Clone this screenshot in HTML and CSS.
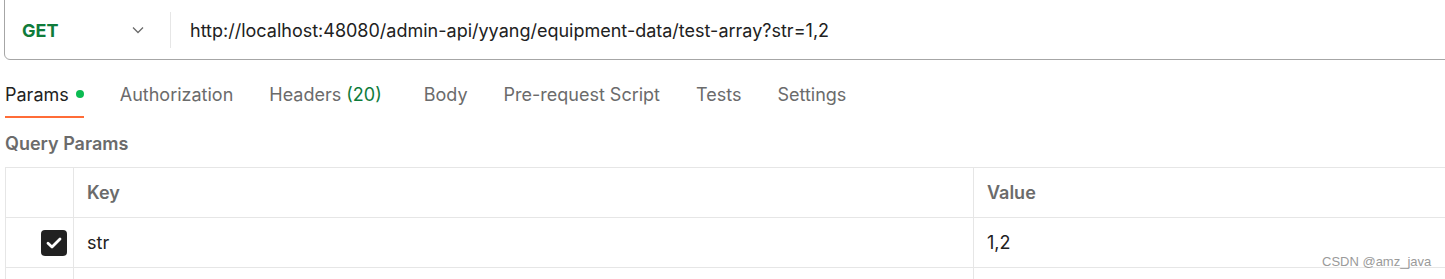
FILE: index.html
```html
<!DOCTYPE html>
<html lang="en">

<head>
  <meta charset="UTF-8" />
  <title>Request - test-array</title>
  <link rel="stylesheet" href="styles.css">
</head>

<body>
  <!-- Request URL bar -->
  <div class="url-bar">
    <div class="method">
      <span class="method-name">GET</span>
      <svg class="chevron" width="12" height="8" viewBox="0 0 12 8">
        <path d="M1 1.5 L6 6.5 L11 1.5" fill="none" stroke="#6b6b6b" stroke-width="1.3" />
      </svg>
    </div>
    <div class="url-input">http://localhost:48080/admin-api/yyang/equipment-data/test-array?str=1,2</div>
  </div>

  <nav class="tabs">
    <a class="tab active">Params <span class="dot"></span></a>
    <a class="tab">Authorization</a>
    <a class="tab headers">Headers <span class="count">(20)</span></a>
    <a class="tab">Body</a>
    <a class="tab">Pre-request Script</a>
    <a class="tab">Tests</a>
    <a class="tab">Settings</a>
  </nav>

  <h3 class="section-title">Query Params</h3>

  <div class="params-table">
    <div class="row head">
      <div class="cell check"></div>
      <div class="cell key">Key</div>
      <div class="cell value">Value</div>
    </div>
    <div class="row">
      <div class="cell check">
        <span class="checkbox">
          <svg width="16" height="12" viewBox="0 0 16 12">
            <path d="M2 6.2 L6 10 L14 2" fill="none" stroke="#fff" stroke-width="2.8" stroke-linecap="round" stroke-linejoin="round" />
          </svg>
        </span>
      </div>
      <div class="cell key">str</div>
      <div class="cell value">1,2</div>
    </div>
    <div class="row empty">
      <div class="cell check"></div>
      <div class="cell key"></div>
      <div class="cell value"></div>
    </div>
  </div>

  <div class="watermark">CSDN @amz_java</div>
</body>

</html>
```

FILE: styles.css
```css
* {
  box-sizing: border-box;
  margin: 0;
  padding: 0;
}

body {
  font-family: 'Inter', 'Noto Sans', sans-serif;
  background: #fff;
  color: #212121;
  width: 1445px;
  height: 279px;
  overflow: hidden;
  position: relative;
}

.url-bar {
  display: flex;
  align-items: center;
  margin: -8px 0 0 4px;
  width: 1460px;
  height: 68px;
  padding-top: 8px;
  border: 1px solid #a6a6a6;
  border-radius: 6px;
}

.method {
  display: flex;
  align-items: center;
  justify-content: space-between;
  width: 166px;
  height: 36px;
  padding: 0 26px 0 17px;
  border-right: 1px solid #e6e6e6;
}

.method-name {
  color: #0f7b3b;
  font-weight: 700;
  font-size: 18px;
}

.url-input {
  padding-left: 19px;
  font-size: 18px;
  color: #212121;
}

.tabs {
  display: flex;
  gap: 36px;
  margin: 19px 0 0 5px;
}

.tab {
  display: flex;
  align-items: center;
  gap: 7px;
  height: 39px;
  padding-bottom: 7px;
  font-size: 18px;
  color: #6b6b6b;
  border-bottom: 2px solid transparent;
}

.tab.active {
  color: #212121;
  border-bottom-color: #ff6c37;
}

.tab.headers {
  gap: 5px;
  margin-right: 6px;
}

.tab .count {
  color: #0f7b3b;
}

.dot {
  width: 8px;
  height: 8px;
  border-radius: 50%;
  background: #0cbb52;
}

.section-title {
  margin: 15px 0 0 5px;
  font-size: 18px;
  font-weight: 600;
  color: #6b6b6b;
}

.params-table {
  margin: 13px 0 0 5px;
  width: 1460px;
  border-top: 1px solid #e6e6e6;
  border-left: 1px solid #e6e6e6;
}

.row {
  display: flex;
  height: 50px;
  border-bottom: 1px solid #e6e6e6;
}

.cell {
  display: flex;
  align-items: center;
  padding-left: 13px;
  font-size: 18px;
  border-right: 1px solid #e6e6e6;
}

.cell.check {
  width: 68px;
  justify-content: flex-end;
  padding: 0 6px 0 0;
}

.cell.key {
  width: 900px;
}

.cell.value {
  flex: 1;
}

.head .cell {
  font-weight: 600;
  color: #6b6b6b;
}

.checkbox {
  display: flex;
  align-items: center;
  justify-content: center;
  width: 26px;
  height: 26px;
  border-radius: 4px;
  background: #212121;
}

.watermark {
  position: absolute;
  left: 1322px;
  top: 254px;
  font-family: 'Liberation Sans', Arial, sans-serif;
  font-size: 13px;
  color: #9a9a9a;
}
```
